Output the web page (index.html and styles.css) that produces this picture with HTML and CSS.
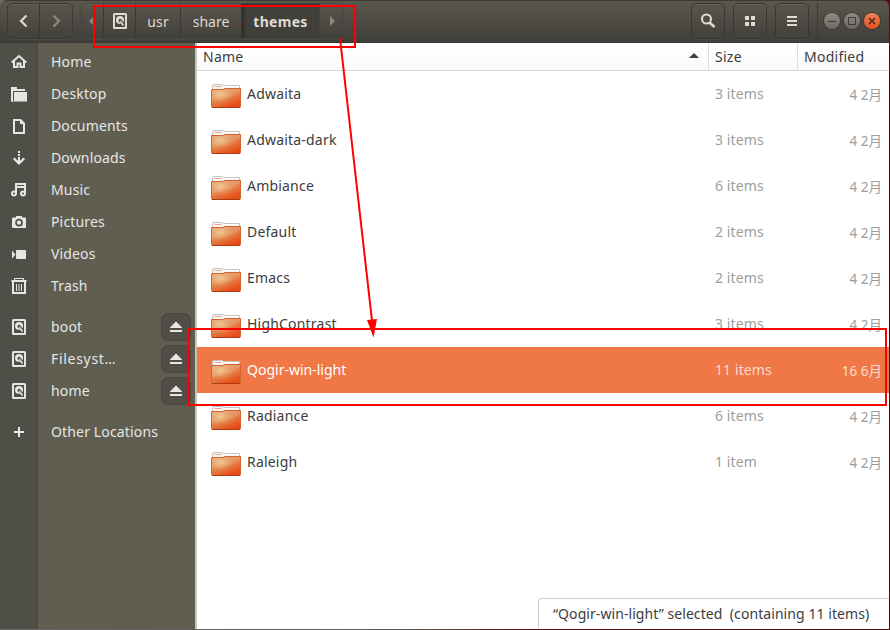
FILE: index.html
```html
<!DOCTYPE html>
<html lang="en">
<head>
    <meta charset="UTF-8">
    <meta name="viewport" content="width=device-width, initial-scale=1.0">
    <title>themes</title>
    <link rel="stylesheet" href="styles.css">
</head>
<body>
    <!-- icon set -->
    <svg class="defs" width="0" height="0">
        <defs>
            <linearGradient id="folder-face" x1="0" y1="0" x2="0.6" y2="1">
                <stop offset="0" stop-color="#e9a877"/>
                <stop offset="0.5" stop-color="#e48a50"/>
                <stop offset="1" stop-color="#e84d18"/>
            </linearGradient>
            <radialGradient id="folder-glow" cx="0.3" cy="0.3" r="0.55">
                <stop offset="0" stop-color="#f2c88e" stop-opacity="0.9"/>
                <stop offset="1" stop-color="#e09050" stop-opacity="0"/>
            </radialGradient>
        </defs>
        <symbol id="folder" viewBox="0 0 30 24">
            <path d="M1.5 10V2Q1.500 .5 3 .5H11Q12 .5 12.500 1.500H28.500V10z" fill="#f6f6f6" stroke="#c4c4c4"/>
            <path d="M3.500 2.500h7" stroke="#f0a880"/>
            <path d="M13 2.500h15" stroke="#fff"/>
            <path d="M.5 5.500H12L13.500 4.500H29.500V22.500Q29.500 23.500 28.500 23.500H1.500Q.5 23.500 .5 22.500z" fill="url(#folder-face)" stroke="#d2622f"/>
            <path d="M1 6H12L13.500 5H29V23H1z" fill="url(#folder-glow)"/>
            <path d="M1 17Q17 16 29 8V5H13.500L12 6H1z" fill="#fff" opacity=".1"/>
            <path d="M1 23.500h28" stroke="#a93c10"/>
        </symbol>
        <symbol id="home" viewBox="0 0 16 16">
            <path d="M.7 8.500L8 2l7.300 6.500" fill="none" stroke="currentColor" stroke-width="2"/>
            <path d="M3 7v6h3.500V9.500h3V13H13V7" fill="none" stroke="currentColor" stroke-width="2"/>
        </symbol>
        <symbol id="desktop" viewBox="0 0 16 16">
            <path d="M0 1h6v2h8v2H2v10.500H0z" fill="currentColor"/>
            <path d="M3 6h13v9.500H0V15h3z" fill="currentColor"/>
            <path d="M2.500 14V5.500H14" fill="none" stroke="#504f47"/>
        </symbol>
        <symbol id="document" viewBox="0 0 16 16">
            <path d="M3 2h6.500L13 5.500V15H3z" fill="none" stroke="currentColor" stroke-width="2"/>
            <path d="M9 1l5 5H9z" fill="currentColor"/>
        </symbol>
        <symbol id="download" viewBox="0 0 16 16">
            <path d="M7 1h2v2H7zM7 4h2v2H7zM7 7h2v5H7z" fill="currentColor"/>
            <path d="M2.700 8.200L8 13.400l5.300-5.200" fill="none" stroke="currentColor" stroke-width="2.200"/>
        </symbol>
        <symbol id="music" viewBox="0 0 16 16">
            <g fill="none" stroke="currentColor" stroke-width="2">
                <circle cx="3" cy="11.500" r="2"/><circle cx="12" cy="11.500" r="2"/>
                <path d="M5 11.500V2H14V11.500M5 5h9"/>
            </g>
        </symbol>
        <symbol id="camera" viewBox="0 0 16 16">
            <path d="M2 3.500h3V2h6v1.500h3q1 0 1 1V13q0 1-1 1H2q-1 0-1-1V4.500q0-1 1-1z" fill="currentColor"/>
            <circle cx="8" cy="8.700" r="3" fill="none" stroke="#504f47" stroke-width="1.700"/>
        </symbol>
        <symbol id="video" viewBox="0 0 16 16">
            <path d="M6 4h8q1 0 1 1v7q0 1-1 1H6q-1 0-1-1V5q0-1 1-1zM1 4.500L4.500 8.500L1 12.500z" fill="currentColor"/>
        </symbol>
        <symbol id="trash" viewBox="0 0 16 16">
            <path d="M2 4v11h12V4" fill="none" stroke="currentColor" stroke-width="2"/>
            <path d="M.5 3h15" stroke="currentColor" stroke-width="2"/>
            <path d="M3.500 2V.5h9V2" fill="none" stroke="currentColor"/>
            <path d="M5.500 6v7M8 6v7M10.500 6v7" stroke="currentColor"/>
        </symbol>
        <symbol id="disk" viewBox="0 0 16 16">
            <rect x="2" y="1" width="12" height="14" rx=".5" fill="none" stroke="currentColor" stroke-width="2"/>
            <circle cx="8" cy="7" r="4" fill="currentColor"/>
            <path d="M7.500 7L11.500 11.500" stroke="#504f47" stroke-width="3.200"/>
            <circle cx="8" cy="7" r="1.300" fill="#504f47"/>
            <path d="M8.200 8.200L11.500 12.500" stroke="currentColor" stroke-width="1.700"/>
        </symbol>
        <symbol id="plus" viewBox="0 0 16 16">
            <path d="M8 3v10M3 8h10" stroke="currentColor" stroke-width="2"/>
        </symbol>
        <symbol id="eject" viewBox="0 0 14 12">
            <path d="M7 0.500L13 6.500v.5H1v-.5zM1 9h12v2H1z" fill="currentColor"/>
        </symbol>
    </svg>

    <div class="window">
        <header class="headerbar">
            <div class="group nav">
                <button class="seg back"><svg width="16" height="16"><path d="M10.500 2.500L5 8l5.500 5.500" fill="none" stroke="currentColor" stroke-width="2.200"/></svg></button>
                <button class="seg forward"><svg width="16" height="16"><path d="M5.500 2.500L11 8l-5.500 5.500" fill="none" stroke="currentColor" stroke-width="2.200"/></svg></button>
            </div>
            <div class="group path">
                <button class="seg scroll-left"><svg width="6" height="10"><path d="M5 0v10L0 5z" fill="currentColor"/></svg></button>
                <button class="seg drive"><svg width="16" height="16"><use href="#disk"/></svg></button>
                <button class="seg crumb usr">usr</button>
                <button class="seg crumb share">share</button>
                <button class="seg crumb themes">themes</button>
                <button class="seg scroll-right"><svg width="6" height="10"><path d="M0 0v10L5 5z" fill="currentColor"/></svg></button>
            </div>
            <div class="tools">
                <button class="tool"><svg width="16" height="16"><circle cx="6.500" cy="6" r="4.500" fill="none" stroke="currentColor" stroke-width="2"/><path d="M9.500 9.500L14.500 14" stroke="currentColor" stroke-width="2.500"/></svg></button>
                <button class="tool"><svg width="16" height="16"><path d="M3 3h4v4H3zM9 3h4v4H9zM3 9h4v4H3zM9 9h4v4H9z" fill="currentColor"/></svg></button>
                <button class="tool"><svg width="16" height="16"><path d="M3 4h10M3 8h10M3 12h10" stroke="currentColor" stroke-width="2"/></svg></button>
            </div>
            <div class="controls">
                <span class="control"><svg width="16" height="16"><path d="M4 8.500h8" stroke="#3b3a35"/></svg></span>
                <span class="control"><svg width="16" height="16"><path d="M4.500 4.500h7v7h-7z" fill="none" stroke="#3b3a35"/></svg></span>
                <span class="control close"><svg width="16" height="16"><path d="M5 5l6 6M11 5l-6 6" stroke="#3c2018" stroke-width="1.200"/></svg></span>
            </div>
        </header>

        <div class="body">
            <nav class="sidebar">
                <div class="place"><span class="picto"><svg><use href="#home"/></svg></span><span class="label">Home</span></div>
                <div class="place"><span class="picto"><svg><use href="#desktop"/></svg></span><span class="label">Desktop</span></div>
                <div class="place"><span class="picto"><svg><use href="#document"/></svg></span><span class="label">Documents</span></div>
                <div class="place"><span class="picto"><svg><use href="#download"/></svg></span><span class="label">Downloads</span></div>
                <div class="place"><span class="picto"><svg><use href="#music"/></svg></span><span class="label">Music</span></div>
                <div class="place"><span class="picto"><svg><use href="#camera"/></svg></span><span class="label">Pictures</span></div>
                <div class="place"><span class="picto"><svg><use href="#video"/></svg></span><span class="label">Videos</span></div>
                <div class="place"><span class="picto"><svg><use href="#trash"/></svg></span><span class="label">Trash</span></div>
                <div class="place spaced"><span class="picto"><svg><use href="#disk"/></svg></span><span class="label">boot</span><button class="eject"><svg><use href="#eject"/></svg></button></div>
                <div class="place"><span class="picto"><svg><use href="#disk"/></svg></span><span class="label filesystem">Filesyst…</span><button class="eject"><svg><use href="#eject"/></svg></button></div>
                <div class="place"><span class="picto"><svg><use href="#disk"/></svg></span><span class="label">home</span><button class="eject"><svg><use href="#eject"/></svg></button></div>
                <div class="place spaced"><span class="picto"><svg><use href="#plus"/></svg></span><span class="label">Other Locations</span></div>
            </nav>

            <main class="files">
                <div class="columns">
                    <span class="col-name">Name<svg class="sort" width="10" height="5"><path d="M0 5L5 0l5 5z" fill="#3c3c3c"/></svg></span>
                    <span class="col-size">Size</span>
                    <span class="col-date">Modified</span>
                </div>
                <div class="row"><svg class="folder"><use href="#folder"/></svg><span class="name">Adwaita</span><span class="size">3 items</span><span class="date">4 2月</span></div>
                <div class="row"><svg class="folder"><use href="#folder"/></svg><span class="name">Adwaita-dark</span><span class="size">3 items</span><span class="date">4 2月</span></div>
                <div class="row"><svg class="folder"><use href="#folder"/></svg><span class="name">Ambiance</span><span class="size">6 items</span><span class="date">4 2月</span></div>
                <div class="row"><svg class="folder"><use href="#folder"/></svg><span class="name">Default</span><span class="size">2 items</span><span class="date">4 2月</span></div>
                <div class="row"><svg class="folder"><use href="#folder"/></svg><span class="name">Emacs</span><span class="size">2 items</span><span class="date">4 2月</span></div>
                <div class="row"><svg class="folder"><use href="#folder"/></svg><span class="name">HighContrast</span><span class="size">3 items</span><span class="date">4 2月</span></div>
                <div class="row selected"><svg class="folder"><use href="#folder"/></svg><span class="name">Qogir-win-light</span><span class="size">11 items</span><span class="date">16 6月</span></div>
                <div class="row"><svg class="folder"><use href="#folder"/></svg><span class="name">Radiance</span><span class="size">6 items</span><span class="date">4 2月</span></div>
                <div class="row"><svg class="folder"><use href="#folder"/></svg><span class="name">Raleigh</span><span class="size">1 item</span><span class="date">4 2月</span></div>
                <div class="status">“Qogir-win-light” selected&nbsp; (containing 11 items)</div>
            </main>
        </div>
    </div>

    <!-- red markers over the path bar and the selected row -->
    <svg class="marks" width="890" height="630">
        <g fill="none" stroke="#fe0000" stroke-width="2">
            <rect x="94" y="6" width="261" height="41"/>
            <rect x="189" y="329" width="697" height="76"/>
            <path d="M340 38L372.500 325"/>
        </g>
        <path d="M367 320L377 319L373.500 337.500z" fill="#fe0000"/>
    </svg>
</body>
</html>
```
FILE: styles.css
```css
body {
    margin: 0;
    width: 890px;
    height: 630px;
    overflow: hidden;
    position: relative;
    background: linear-gradient(to right, #6b6a66 0, #5b5955 45%, #5c1a1e 58%, #4a1216 100%);
    font-family: "Noto Sans", "Noto Sans CJK SC", sans-serif;
    font-size: 14px;
    color: #3c3c3c;
}
button {
    font: inherit;
    color: inherit;
    background: none;
    border: 0;
    padding: 0;
    display: flex;
    align-items: center;
    justify-content: center;
}
svg {
    display: block;
    flex: none;
}
.defs {
    position: absolute;
}
.window {
    width: 889px;
    height: 629px;
    display: flex;
    flex-direction: column;
    overflow: hidden;
    border-radius: 7px 7px 0 0;
}

/* header bar */
.headerbar {
    box-sizing: border-box;
    height: 43px;
    display: flex;
    align-items: flex-start;
    padding: 2px 9px 0 7px;
    background: linear-gradient(#5a574d, #3f3e39);
    border-top: 1px solid #3b3a35;
    border-bottom: 1px solid #393832;
    color: #dfdbd2;
}
.group {
    box-sizing: border-box;
    height: 36px;
    display: flex;
    border: 1px solid #3a3934;
    border-radius: 5px;
    box-shadow: inset 0 1px rgba(255, 255, 255, .06), 0 1px rgba(255, 255, 255, .05);
    overflow: hidden;
}
.nav {
    width: 66px;
}
.path {
    width: 262px;
    margin-left: 8px;
    border-color: #45443e;
}
.seg {
    box-sizing: border-box;
    height: 34px;
    border-right: 1px solid #393832;
}
.seg:last-child {
    border-right: 0;
}
.back, .forward {
    width: 32px;
}
.forward, .scroll-left, .scroll-right {
    color: #8b8980;
}
.scroll-left { width: 22px; padding-right: 2px; }
.drive { width: 32px; }
.usr { width: 45px; letter-spacing: .2px; }
.share { width: 61px; }
.themes {
    width: 78px;
    font-weight: bold;
    letter-spacing: .3px;
    background: #403f39;
    border-right-color: #45443e;
    box-shadow: inset 2px 1px 3px rgba(0, 0, 0, .3);
}
.scroll-right { width: 22px; padding-left: 4px; }
.tools {
    display: flex;
    gap: 8px;
    margin-left: auto;
    padding-right: 8px;
    border-right: 1px solid #3b3a35;
}
.tool {
    box-sizing: border-box;
    width: 34px;
    height: 36px;
    border: 1px solid #383731;
    border-radius: 5px;
    box-shadow: inset 0 1px rgba(255, 255, 255, .08), 0 1px rgba(255, 255, 255, .05);
}
.controls {
    display: flex;
    gap: 4px;
    margin: 10px 0 0 6px;
}
.control {
    width: 16px;
    height: 16px;
    border-radius: 50%;
    background: linear-gradient(#8d8b83, #6a6861);
    box-shadow: 0 0 0 1px #3b3a35;
}
.close {
    background: linear-gradient(#f58158, #e4511f);
}

.body {
    flex: 1;
    display: flex;
    min-height: 0;
}

/* places */
.sidebar {
    box-sizing: border-box;
    width: 197px;
    padding-top: 3px;
    border-right: 2px solid #c8c4bf;
    background: linear-gradient(to right, #504f47 37px, #48473f 37px, #48473f 38px, #605e51 38px);
    color: #e6e6e6;
    letter-spacing: .15px;
}
.place {
    height: 32px;
    display: flex;
    align-items: center;
}
.spaced {
    margin-top: 9px;
}
.picto {
    width: 38px;
}
.picto svg {
    width: 16px;
    height: 16px;
    margin-left: 11px;
}
.label {
    margin-left: 13px;
    padding-bottom: 2px;
    white-space: nowrap;
}
.filesystem {
    letter-spacing: .7px;
}
.eject {
    box-sizing: border-box;
    width: 30px;
    height: 28px;
    margin-left: auto;
    margin-right: 4px;
    border: 1px solid #484640;
    border-radius: 7px;
    background: #504e47;
}
.eject svg {
    width: 14px;
    height: 12px;
}

/* file list */
.files {
    flex: 1;
    display: flex;
    flex-direction: column;
    background: #fff;
}
.columns {
    height: 27px;
    display: flex;
    line-height: 27px;
    letter-spacing: .25px;
    background: linear-gradient(#fff, #fafafa);
    border-bottom: 1px solid #d8d8d8;
}
.col-name {
    width: 496px;
    display: flex;
    align-items: center;
    justify-content: space-between;
    padding-left: 6px;
}
.sort {
    margin-bottom: 2px;
}
.col-size {
    box-sizing: border-box;
    width: 89px;
    margin-left: 9px;
    padding-left: 6px;
    border-left: 1px solid #dcdcdc;
}
.col-date {
    flex: 1;
    padding-left: 6px;
    border-left: 1px solid #dcdcdc;
}
.row {
    height: 46px;
    display: flex;
    align-items: center;
    padding: 0 7px 0 14px;
}
.folder {
    width: 30px;
    height: 24px;
    margin-top: 4px;
}
.name {
    width: 468px;
    margin-left: 6px;
    padding-bottom: 2px;
    letter-spacing: .2px;
}
.selected .name {
    letter-spacing: 0;
}
.size, .date {
    color: #9d9d9d;
}
.size {
    padding-bottom: 2px;
    letter-spacing: .1px;
}
.date {
    margin-left: auto;
    font-size: 13.5px;
    padding-bottom: 1px;
}
.selected {
    background: #f07746;
    color: #fff;
}
.selected .size, .selected .date {
    color: #fbdccf;
}
.status {
    box-sizing: border-box;
    width: 351px;
    height: 31px;
    margin-top: auto;
    margin-left: auto;
    padding-left: 14px;
    line-height: 30px;
    letter-spacing: .07px;
    white-space: nowrap;
    border: 1px solid #cdcdcd;
    border-width: 1px 0 0 1px;
    border-radius: 4px 0 0 0;
}

.marks {
    position: absolute;
    top: 0;
    left: 0;
}
```
